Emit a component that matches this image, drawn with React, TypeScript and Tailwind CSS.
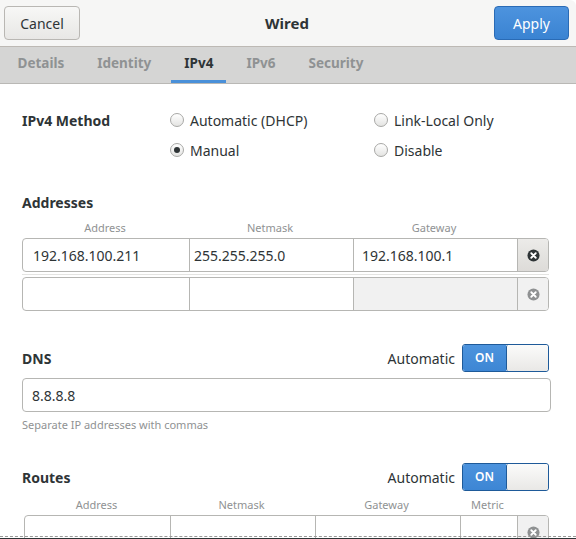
import React from 'react';

const font = { fontFamily: '"Noto Sans", "Open Sans", sans-serif' };

function Radio({ label, checked }: { label: string; checked?: boolean }) {
  return (
    <div className="flex items-center gap-[6px] h-[30px]">
      <span className="w-[14px] h-[14px] rounded-full border border-[#a8a8a6] bg-gradient-to-b from-white to-[#e4e4e2] flex items-center justify-center">
        {checked && <span className="w-[6px] h-[6px] rounded-full bg-[#2e3436]" />}
      </span>
      <span className="text-[14px] text-[#2e3436]">{label}</span>
    </div>
  );
}

function ClearIcon({ dim }: { dim?: boolean }) {
  return (
    <svg width="13" height="13" viewBox="0 0 14 14">
      <circle cx="7" cy="7" r="6.5" fill={dim ? '#8f9192' : '#2e3436'} />
      <path d="M4.6 4.6 L9.4 9.4 M9.4 4.6 L4.6 9.4" stroke="#ffffff" strokeWidth="2" strokeLinecap="round" />
    </svg>
  );
}

function Switch() {
  return (
    <div className="flex h-[28px] w-[87px] rounded-[3px] border border-[#1e5a99] overflow-hidden">
      <div className="w-[43px] bg-gradient-to-b from-[#4c93dd] to-[#3d86d4] flex items-center justify-center text-white text-[12px] font-semibold">
        ON
      </div>
      <div className="flex-1 rounded-[2px] border-l border-[#1e5a99] bg-gradient-to-b from-[#fbfbfa] to-[#e9e8e6]" />
    </div>
  );
}

function SectionHead({ title, toggle }: { title: string; toggle?: boolean }) {
  return (
    <div className="flex items-center justify-between h-[28px]">
      <span className="text-[14px] font-bold text-[#2e3436]">{title}</span>
      {toggle && (
        <div className="flex items-center gap-[7px]">
          <span className="text-[14px] text-[#2e3436]">Automatic</span>
          <Switch />
        </div>
      )}
    </div>
  );
}

export default function App() {
  const tabs = ['Details', 'Identity', 'IPv4', 'IPv6', 'Security'];

  return (
    <div className="relative w-[576px] h-[539px] overflow-hidden bg-white text-[#2e3436]" style={font}>
      <header className="h-[47px] flex items-center pl-[4px] pr-[7px] bg-[#f6f6f5] border-b border-[#bdb9b4] rounded-tr-[6px]">
        <button className="w-[76px] h-[34px] rounded-[4px] border border-[#b9b7b3] bg-gradient-to-b from-[#f7f7f6] to-[#e8e7e5] text-[14px] text-[#2e3436]">
          Cancel
        </button>
        <div className="flex-1 text-center text-[15px] font-bold">Wired</div>
        <button className="w-[75px] h-[34px] rounded-[4px] border border-[#2a6bb5] bg-gradient-to-b from-[#4d93de] to-[#3a83d2] text-[14px] text-white">
          Apply
        </button>
      </header>

      <nav className="h-[37px] flex pl-[1px] bg-[#d5d5d4] border-b border-[#b9b8b5]">
        {tabs.map(t => (
          <div key={t} className="flex flex-col px-[16.5px]">
            <div
              className={`flex-1 flex items-center justify-center text-[13.5px] font-bold ${
                t === 'IPv4' ? 'text-[#2e3436]' : 'text-[#8f9293]'
              }`}
            >
              {t}
            </div>
            <div className={`h-[3px] -mx-[13px] ${t === 'IPv4' ? 'bg-[#4a90d9]' : ''}`} />
          </div>
        ))}
      </nav>

      <main className="pl-[22px] pr-[27px]">
        <div className="grid grid-cols-[148px_204px_1fr] mt-[21px]">
          <div className="h-[30px] flex items-center text-[14px] font-bold">IPv4 Method</div>
          <Radio label="Automatic (DHCP)" />
          <Radio label="Link-Local Only" />
          <div />
          <Radio label="Manual" checked />
          <Radio label="Disable" />
        </div>

        <div className="mt-[27px] h-[20px] flex items-center text-[14px] font-bold">Addresses</div>
        <div className="mt-[9px] grid grid-cols-[166px_164px_164px_1fr] text-[11px] text-[#8f9293] h-[14px] leading-[14px]">
          <div className="text-center">Address</div>
          <div className="text-center">Netmask</div>
          <div className="text-center">Gateway</div>
          <div />
        </div>
        <div className="mt-[3px] h-[34px] grid grid-cols-[166px_164px_164px_1fr] border border-[#b6b6b3] rounded-[4px] overflow-hidden text-[14px]">
          <div className="flex items-center px-[10px]">192.168.100.211</div>
          <div className="flex items-center px-[4px] border-l border-[#b6b6b3]">255.255.255.0</div>
          <div className="flex items-center px-[8px] border-l border-[#b6b6b3]">192.168.100.1</div>
          <div className="flex items-center justify-center border-l border-[#b6b6b3] bg-gradient-to-b from-[#ecebe9] to-[#dddbd8]">
            <ClearIcon />
          </div>
        </div>
        <div className="mt-[2px] h-px bg-[#e4e4e2]" />
        <div className="mt-[2px] h-[34px] grid grid-cols-[166px_164px_164px_1fr] border border-[#b6b6b3] rounded-[4px] overflow-hidden">
          <div />
          <div className="border-l border-[#b6b6b3]" />
          <div className="border-l border-[#b6b6b3] bg-[#f1f1f1]" />
          <div className="flex items-center justify-center border-l border-[#b6b6b3] bg-[#f1f1f1]">
            <ClearIcon dim />
          </div>
        </div>

        <div className="mt-[33px]">
          <SectionHead title="DNS" toggle />
        </div>
        <div className="mt-[6px] -mr-[2px] h-[34px] flex items-center px-[9px] border border-[#b6b6b3] rounded-[4px] text-[14px]">
          8.8.8.8
        </div>
        <div className="mt-[6px] h-[14px] leading-[14px] text-[11px] text-[#8f9293]">Separate IP addresses with commas</div>

        <div className="mt-[31px]">
          <SectionHead title="Routes" toggle />
        </div>
        <div className="mt-[7px] ml-[2px] grid grid-cols-[145px_145px_145px_57px_1fr] text-[11px] text-[#8f9293] h-[14px] leading-[14px]">
          <div className="text-center">Address</div>
          <div className="text-center">Netmask</div>
          <div className="text-center">Gateway</div>
          <div className="text-center">Metric</div>
          <div />
        </div>
        <div className="mt-[3px] ml-[2px] h-[34px] grid grid-cols-[145px_145px_145px_57px_1fr] border border-[#b6b6b3] rounded-[4px] overflow-hidden">
          <div />
          <div className="border-l border-[#b6b6b3]" />
          <div className="border-l border-[#b6b6b3]" />
          <div className="border-l border-[#b6b6b3]" />
          <div className="flex items-center justify-center border-l border-[#b6b6b3] bg-[#f1f1f1]">
            <ClearIcon dim />
          </div>
        </div>
      </main>

      <div className="absolute left-0 right-0 bottom-0 h-[3px] border-t border-dashed border-[#9a9a98]">
        <div className="absolute left-0 right-0 bottom-0 h-px bg-[#2e3436]" />
      </div>
    </div>
  );
}
